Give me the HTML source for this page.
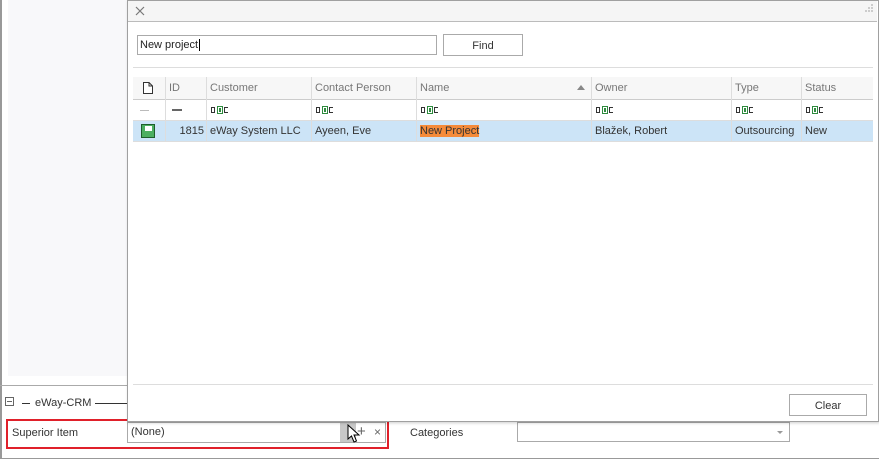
<!DOCTYPE html>
<html><head><style>
*{margin:0;padding:0;box-sizing:border-box}
body{width:879px;height:459px;position:relative;background:#fff;font-family:"Liberation Sans",sans-serif;font-size:11px;color:#333;overflow:hidden}
.a{position:absolute}
.abc{position:absolute;top:6px;left:4px;width:17px;height:8px}
.abc i{position:absolute;top:1px;width:4px;height:6px;border:1px solid #333}
.abc b{position:absolute;left:6px;top:0;width:6px;height:8px;background:#2e8b3e}
.abc b:after{content:"";position:absolute;left:1px;top:1px;width:2px;height:4px;border:1px solid #fff}
.h{position:absolute;top:77px;height:23px;border-left:1px solid #ddd;color:#777;padding:5px 0 0 3px}
.f{position:absolute;top:100px;height:20px;border-left:1px solid #ddd}
.d{position:absolute;top:121px;height:20px;border-left:1px solid #ddd;padding:4px 0 0 3px;color:#333}
</style></head><body>
<div class="a" style="left:0;top:0;width:2px;height:459px;background:#999"></div>
<div class="a" style="left:8px;top:0;width:120px;height:376px;background:#f8f8fa"></div>
<div class="a" style="left:0;top:385px;width:128px;height:1px;background:#aaa"></div>
<div class="a" style="left:0;top:458px;width:879px;height:1px;background:#999"></div>
<div class="a" style="left:5px;top:397px;width:9px;height:9px;border:1px solid #666"></div>
<div class="a" style="left:7px;top:401px;width:5px;height:1px;background:#666"></div>
<div class="a" style="left:22px;top:403px;width:8px;height:1px;background:#333"></div>
<div class="a" style="left:35px;top:397px;color:#333">eWay-CRM</div>
<div class="a" style="left:95px;top:403px;width:33px;height:1px;background:#333"></div>
<div class="a" style="left:6px;top:419px;width:383px;height:30px;border:2px solid #e0202a"></div>
<div class="a" style="left:12px;top:427px">Superior Item</div>
<div class="a" style="left:127px;top:422px;width:259px;height:21px;border:1px solid #aaa;background:#fff"></div>
<div class="a" style="left:131px;top:426px">(None)</div>
<div class="a" style="left:340px;top:423px;width:16px;height:19px;background:#c8c8c8"></div>
<div class="a" style="left:357px;top:423px;font-size:15px;color:#666;line-height:17px">+</div>
<div class="a" style="left:374px;top:425px;font-size:12px;color:#666">×</div>
<svg class="a" style="left:347px;top:424px" width="14" height="20"><path d="M1 1 L1 15 L4.5 12 L7 18 L9.5 17 L7 11 L12 11 Z" fill="#fff" stroke="#000" stroke-width="1"/></svg>
<div class="a" style="left:410px;top:427px">Categories</div>
<div class="a" style="left:517px;top:422px;width:273px;height:20px;border:1px solid #aaa"></div>
<div class="a" style="left:777px;top:431px;border:3px solid transparent;border-top:3px solid #999"></div>
<!-- dialog -->
<div class="a" style="left:127px;top:0;width:752px;height:422px;border:1px solid #a0a0a0;background:#fff;box-shadow:1px 1px 3px rgba(0,0,0,.2)"></div>
<div class="a" style="left:128px;top:1px;width:749px;height:21px;background:#f5f5f5;border-bottom:1px solid #bbb"></div>
<svg class="a" style="left:135px;top:6px" width="10" height="10"><path d="M1 1 L9 9 M9 1 L1 9" stroke="#777" stroke-width="1.2"/></svg>
<svg class="a" style="left:865px;top:4px" width="10" height="10" fill="#ccc"><rect x="6" y="0" width="2" height="2"/><rect x="6" y="3" width="2" height="2"/><rect x="3" y="3" width="2" height="2"/><rect x="6" y="6" width="2" height="2"/><rect x="3" y="6" width="2" height="2"/><rect x="0" y="6" width="2" height="2"/></svg>
<div class="a" style="left:137px;top:35px;width:300px;height:20px;border:1px solid #aaa"></div>
<div class="a" style="left:140px;top:39px;color:#222">New project<span style="border-left:1px solid #000;margin-left:1px"></span></div>
<div class="a" style="left:443px;top:34px;width:80px;height:22px;border:1px solid #aaa;text-align:center;padding-top:5px">Find</div>
<div class="a" style="left:133px;top:67px;width:740px;height:1px;background:#ddd"></div>
<div class="a" style="left:133px;top:77px;width:740px;height:23px;background:#f7f7f7;border-bottom:1px solid #ccc"></div>
<svg class="a" style="left:143px;top:82px" width="10" height="12"><path d="M0.5 0.5 H6 L9.5 4 V11.5 H0.5 Z M6 0.5 V4 H9.5" fill="#fff" stroke="#333"/></svg>
<div class="h" style="left:165px">ID</div>
<div class="h" style="left:206px">Customer</div>
<div class="h" style="left:311px">Contact Person</div>
<div class="h" style="left:416px;width:175px">Name<span style="position:absolute;right:6px;top:8px;border:4px solid transparent;border-bottom:5px solid #888;border-top:0"></span></div>
<div class="h" style="left:591px">Owner</div>
<div class="h" style="left:731px">Type</div>
<div class="h" style="left:801px">Status</div>
<div class="a" style="left:133px;top:120px;width:740px;height:2px;background:#ddd"></div>
<div class="a" style="left:140px;top:110px;width:9px;height:1px;background:#bbb"></div>
<div class="f" style="left:165px"></div>
<div class="a" style="left:172px;top:109px;width:10px;height:2px;background:#666"></div>
<div class="f" style="left:206px"><span class="abc"><i style="left:0"></i><b></b><i style="left:13px;border-right:0"></i></span></div>
<div class="f" style="left:311px"><span class="abc"><i style="left:0"></i><b></b><i style="left:13px;border-right:0"></i></span></div>
<div class="f" style="left:416px"><span class="abc"><i style="left:0"></i><b></b><i style="left:13px;border-right:0"></i></span></div>
<div class="f" style="left:591px"><span class="abc"><i style="left:0"></i><b></b><i style="left:13px;border-right:0"></i></span></div>
<div class="f" style="left:731px"><span class="abc"><i style="left:0"></i><b></b><i style="left:13px;border-right:0"></i></span></div>
<div class="f" style="left:801px"><span class="abc"><i style="left:0"></i><b></b><i style="left:13px;border-right:0"></i></span></div>
<div class="a" style="left:133px;top:121px;width:740px;height:21px;background:#cce4f7;border-bottom:1px solid #ddd"></div>
<div class="a" style="left:141px;top:124px;width:14px;height:14px;background:#4caf60;border:1px solid #1e5e2a"></div>
<div class="a" style="left:145px;top:126px;width:7px;height:5px;background:#fff"></div>
<div class="d" style="left:165px;width:41px;text-align:right;padding-right:2px">1815</div>
<div class="d" style="left:206px">eWay System LLC</div>
<div class="d" style="left:311px">Ayeen, Eve</div>
<div class="d" style="left:416px"><span style="background:#f58b3a">New Project</span></div>
<div class="d" style="left:591px">Blažek, Robert</div>
<div class="d" style="left:731px">Outsourcing</div>
<div class="d" style="left:801px">New</div>
<div class="a" style="left:133px;top:384px;width:740px;height:1px;background:#ddd"></div>
<div class="a" style="left:789px;top:394px;width:78px;height:22px;border:1px solid #aaa;text-align:center;padding-top:5px">Clear</div>
</body></html>
